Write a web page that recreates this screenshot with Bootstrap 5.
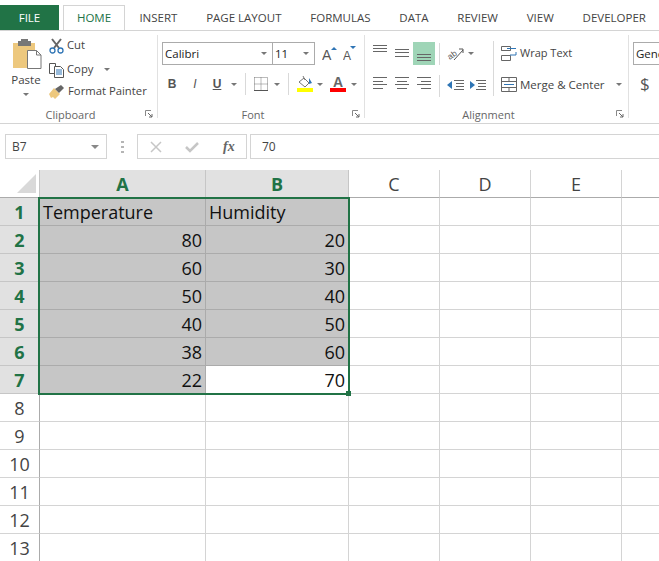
<!doctype html>
<html lang="en"><head><meta charset="utf-8"><title>Excel</title>
<link href="https://cdn.jsdelivr.net/npm/bootstrap@5.3.0/dist/css/bootstrap.min.css" rel="stylesheet">
<style>
html,body{height:561px;overflow:hidden;background:#fff;font-family:"Open Sans","Noto Sans",sans-serif;color:#444}
.tabbar{height:31px;border-bottom:1px solid #d4d4d4;align-items:flex-end;flex-wrap:nowrap;white-space:nowrap;font-size:11.5px;overflow:hidden}
.tabbar .nav-link{flex:none;height:25px;line-height:25px;padding:0 14.4px;color:#444;border:0;border-radius:0;background:none}
.tabbar .nav-link.tab-file{width:59px;margin-right:4px;padding:0;text-align:center;background:#217346;color:#fff}
.tabbar .nav-link.active{width:62px;padding:0;text-align:center;color:#217346;border:1px solid #d4d4d4;border-bottom:0;height:25px;line-height:24px}
.ribbon{height:93px;border-bottom:1px solid #d4d4d4;font-size:11.3px;white-space:nowrap;overflow:hidden}
.grp{flex:none;border-right:1px solid #e1e1e1;height:83px;margin-top:4px;position:relative;display:flex;flex-direction:column}
.g-clip{width:158px}.g-font{width:207px}.g-align{width:264px}.g-num{border:0;width:30px}
.grp-body{height:73px;flex:none}
.grp-lab{height:14px;line-height:14px;font-size:11px;text-align:center;color:#666;padding-right:16px}
.launch{position:absolute;right:4px;bottom:0;width:8px;height:8px}
.paste{width:40px;margin:4px 0 0 6px;text-align:center;font-size:11.5px}
.paste span{display:block;line-height:14px;margin-top:4px}
.paste .caret{display:block;margin:6px auto 0}
.clip-list{margin:-1px 0 0 3px;width:105px}
.clip-row{height:23px;gap:3px}
.clip-row svg{flex:none}
.clip-row.copyrow{margin-top:1px;margin-bottom:-1px}
.caret{width:0;height:0;border:3px solid transparent;border-top:3px solid #777;border-bottom:0;display:inline-block;flex:none}
.box{border:1px solid #ababab;height:23px;background:#fff;font-size:11.5px;color:#222;padding:0 5px 0 2px}
.fr1{margin:7px 0 0 4px;height:23px}.fr2{margin:7px 0 0 3px;height:24px}
.vsep{width:1px;background:#d9d9d9;height:22px;flex:none}
.vsep2{width:1px;background:#d9d9d9;flex:none;height:55px;margin:6px 0 0 7px}
.ic{flex:none;display:block}
.bt{font-size:12px;font-weight:700;color:#555;width:22px;text-align:center;font-family:"Liberation Sans",sans-serif;line-height:18px}
.act{background:#9fd5b7}
.atxt{font-size:11.5px;color:#444;gap:3px}
.atxt.wrapt{font-size:11px}
.fbar{height:46px;padding:10px 0 11px 5px}
.fbox{border:1px solid #d4d4d4;height:25px;background:#fff;font-size:12px;color:#444;flex:none}
.namebox{width:102px;padding:0 6px}
.nbcaret{border-width:4px 4px 0;border-top-color:#888;margin-right:1px}
.fdots{width:30px;flex:none;display:flex;align-items:center;justify-content:center}
.fbtns{width:110px;padding-left:12px}
.fb2{margin-left:23px}.fb3{margin-left:24px;font-family:"Liberation Serif",serif;font-style:italic;font-weight:700;color:#666;font-size:14px}
.fval{width:420px;margin-left:3px;padding:0 11px}
.sheetwrap{position:relative;height:391px;overflow:hidden}
.sheet{table-layout:fixed;border-collapse:separate;border-spacing:0;width:760px;margin:0;font-family:"Open Sans","Noto Sans",sans-serif}
.sheet th,.sheet td{padding:1px 0 0;height:28px;border:0;border-right:1px solid #d4d4d4;border-bottom:1px solid #d4d4d4;font-size:18px;line-height:26px;color:#111;box-shadow:none;background:#fff;overflow:hidden;white-space:nowrap}
.sheet thead th{height:28px;text-align:center;font-weight:400;color:#444;border-bottom-color:#ababab;vertical-align:middle;padding:0}
.sheet tbody th{text-align:center;font-weight:400;color:#444;border-right-color:#ababab}
.sheet .hdsel{background:#e1e1e1;color:#217346;font-weight:700;border-right-color:#c6c6c6;border-bottom-color:#c6c6c6}
.sheet tbody th.hdsel{border-right-color:#ababab}
.sheet thead th.hdsel{border-bottom-color:#ababab}
.sheet td.csel{background:#c6c6c6;border-color:#ababab}
.sheet td{padding:1px 3px 0}
.sheet td.num{text-align:right}
.sheet thead th.corner{border-right-color:#c6c6c6;position:relative;padding:0}
.sheet thead th.corner svg{display:block}
.selbox{position:absolute;left:38px;top:27px;width:312px;height:198px;border:2px solid #217346;pointer-events:none}
.handle{position:absolute;right:-3px;bottom:-3px;width:5px;height:5px;background:#217346}
</style></head><body>
<nav class="nav tabbar d-flex">
<a class="nav-link tab-file" href="#">FILE</a><a class="nav-link active" href="#">HOME</a><a class="nav-link" href="#">INSERT</a><a class="nav-link" href="#">PAGE LAYOUT</a><a class="nav-link" href="#">FORMULAS</a><a class="nav-link" href="#">DATA</a><a class="nav-link" href="#">REVIEW</a><a class="nav-link" href="#">VIEW</a><a class="nav-link" href="#">DEVELOPER</a>
</nav>
<section class="ribbon d-flex">
 <div class="grp g-clip">
  <div class="grp-body d-flex">
   <div class="paste">
    <svg class="ic" width="29" height="30" viewBox="0 0 29 30" style="margin-left:7px"><rect x="0" y="4" width="22" height="25" fill="#edc87e"/><rect x="5" y="2" width="13" height="5" fill="#777"/><rect x="8" y="0" width="7" height="3" fill="#777"/><path d="M14.500 11.500h9l4.500 4.500v13.500H14.500z" fill="#fff" stroke="#777"/><path d="M23.500 11.500V16H28" fill="none" stroke="#777"/></svg>
    <span>Paste</span><i class="caret"></i>
   </div>
   <div class="clip-list">
    <div class="clip-row d-flex align-items-center"><svg width="15" height="16" viewBox="0 0 15 16"><path d="M3 1l7 9M12 1L5 10" stroke="#666" stroke-width="2" fill="none"/><circle cx="3.500" cy="12.500" r="2.500" fill="none" stroke="#2f75b5" stroke-width="1.300"/><circle cx="11.500" cy="12.500" r="2.500" fill="none" stroke="#2f75b5" stroke-width="1.300"/></svg><span>Cut</span></div>
    <div class="clip-row copyrow d-flex align-items-center"><svg width="15" height="16" viewBox="0 0 15 16"><path d="M.5 1.500h6v10h-6z" fill="#fff" stroke="#555"/><path d="M5.500 4.500h6l3 3v8h-9z" fill="#fff" stroke="#555"/><path d="M7 8h6M7 10h6M7 12h6" stroke="#2f75b5"/></svg><span>Copy</span><i class="caret ms-2"></i></div>
    <div class="clip-row d-flex align-items-center"><svg width="16" height="15" viewBox="0 0 16 15"><path d="M0 10l5-6 6 6-5 5-2-2-2 1z" fill="#edc87e"/><path d="M6 5l6-4 3 3-5 5z" fill="#666"/></svg><span>Format Painter</span></div>
   </div>
  </div>
  <div class="grp-lab">Clipboard</div>
  <svg class="launch" viewBox="0 0 8 8"><path d="M.5 6V.5H6" fill="none" stroke="#888"/><path d="M3 3l4 4M7 4v3H4" fill="none" stroke="#666"/></svg>
 </div>
 <div class="grp g-font">
  <div class="grp-body">
   <div class="fr1 d-flex align-items-center">
    <div class="box d-flex align-items-center justify-content-between" style="width:111px"><span>Calibri</span><i class="caret"></i></div>
    <div class="box d-flex align-items-center justify-content-between" style="width:43px;margin-left:-1px"><span>11</span><i class="caret"></i></div>
    <svg class="ic" width="20" height="18" viewBox="0 0 20 18" style="margin-left:7px"><text x="0" y="15" font-size="14" fill="#555" font-family="Liberation Sans">A</text><path d="M9 5l3-3 3 3z" fill="#2f75b5"/></svg>
    <svg class="ic" width="16" height="18" viewBox="0 0 16 18" style="margin-left:1px"><text x="0" y="15" font-size="12" fill="#555" font-family="Liberation Sans">A</text><path d="M7 1h6l-3 3z" fill="#2f75b5"/></svg>
   </div>
   <div class="fr2 d-flex align-items-center">
    <span class="bt">B</span><span class="bt" style="font-style:italic;font-weight:400;margin-left:1px">I</span><span class="bt text-decoration-underline">U</span><i class="caret" style="margin:0 8px 0 3px"></i><span class="vsep"></span>
    <svg class="ic" width="14" height="14" viewBox="0 0 14 14" style="margin-left:8px"><path d="M.5.5h13v13M.5.5v13M7 .5v13M.5 7h13" fill="none" stroke="#777" stroke-dasharray="1 1"/><path d="M0 13.500h14" stroke="#555"/></svg><i class="caret" style="margin:0 8px 0 6px"></i><span class="vsep"></span>
    <svg class="ic" width="16" height="18" viewBox="0 0 16 18" style="margin-left:8px"><path d="M2 7l5-4 5 5-4 4z" fill="#fff" stroke="#777"/><path d="M6 1l2 4" stroke="#777"/><path d="M12 3l3 5-3 1z" fill="#2f75b5"/><rect x="0" y="13" width="16" height="4" fill="#ffff00"/></svg><i class="caret" style="margin:0 7px 0 4px"></i>
    <svg class="ic" width="16" height="18" viewBox="0 0 16 18"><text x="8" y="12" text-anchor="middle" font-size="14" font-weight="700" fill="#666" font-family="Liberation Sans">A</text><rect x="0" y="13" width="16" height="4" fill="#f00"/></svg><i class="caret" style="margin-left:5px"></i>
   </div>
  </div>
  <div class="grp-lab">Font</div>
  <svg class="launch" viewBox="0 0 8 8"><path d="M.5 6V.5H6" fill="none" stroke="#888"/><path d="M3 3l4 4M7 4v3H4" fill="none" stroke="#666"/></svg>
 </div>
 <div class="grp g-align">
  <div class="grp-body d-flex">
   <div style="margin:7px 0 0 4px">
    <div class="d-flex" style="height:23px">
     <svg class="ic" width="22" height="23" viewBox="0 0 22 23"><path d="M4 3.500h14M4 6.500h14M4 9.500h14" stroke="#666"/></svg>
     <svg class="ic" width="22" height="23" viewBox="0 0 22 23"><path d="M4 7.500h14M4 10.500h14M4 14.500h14" stroke="#666"/></svg>
     <svg class="ic act" width="22" height="23" viewBox="0 0 22 23"><path d="M4 12.500h14M4 15.500h14M4 18.500h14" stroke="#666"/></svg>
    </div>
    <div class="d-flex" style="margin-top:9px;height:23px">
     <svg class="ic" width="22" height="23" viewBox="0 0 22 23"><path d="M4 3.500h14M4 7.500h10M4 10.500h14M4 14.500h10" stroke="#666"/></svg>
     <svg class="ic" width="22" height="23" viewBox="0 0 22 23"><path d="M4 3.500h14M6 7.500h10M4 10.500h14M6 14.500h10" stroke="#666"/></svg>
     <svg class="ic" width="22" height="23" viewBox="0 0 22 23"><path d="M4 3.500h14M8 7.500h10M4 10.500h14M8 14.500h10" stroke="#666"/></svg>
    </div>
   </div>
   <div class="d-flex flex-column" style="margin-top:7px">
    <div class="d-flex align-items-center" style="height:23px;margin-left:4px"><span class="vsep"></span>
     <svg class="ic" width="18" height="18" viewBox="0 0 18 18" style="margin-left:7px;overflow:visible"><text x="0" y="12" font-size="8.500" fill="#555" transform="rotate(-35 6 9)" font-family="Liberation Sans">ab</text><path d="M7 15L16 5M12 4h4v4" fill="none" stroke="#555"/></svg><i class="caret" style="margin-left:3px"></i></div>
    <div class="d-flex align-items-center" style="height:23px;margin:9px 0 0 4px"><span class="vsep"></span>
     <svg class="ic" width="17" height="13" viewBox="0 0 17 13" style="margin-left:7px"><path d="M7 1.500h10M9 4.500h8M9 7.500h8M7 10.500h10" stroke="#666"/><path d="M0 6l5-4v8z" fill="#2f75b5"/></svg>
     <svg class="ic" width="17" height="13" viewBox="0 0 17 13" style="margin-left:5px"><path d="M7 1.500h10M9 4.500h8M9 7.500h8M7 10.500h10" stroke="#666"/><path d="M6 6L1 2v8z" fill="#2f75b5"/></svg></div>
   </div>
   <span class="vsep2"></span>
   <div style="margin:7px 0 0 7px">
    <div class="atxt wrapt d-flex align-items-center" style="height:23px"><svg class="ic" width="16" height="15" viewBox="0 0 16 15"><path d="M.5.500h9v4h-9zM.5 4.500h9M.5 9.500h9v5h-9z" fill="none" stroke="#666"/><path d="M6 2.500h9M15 6v3H9" fill="none" stroke="#2f75b5"/></svg><span>Wrap Text</span></div>
    <div class="atxt d-flex align-items-center" style="height:23px;margin-top:8px"><svg class="ic" width="16" height="15" viewBox="0 0 16 15"><path d="M.5.500h15v14H.5zM.5 4.500h15M.5 10.500h15M8 .5v4M8 10.500v4" fill="none" stroke="#666"/><path d="M3 7.500h10" stroke="#2f75b5"/></svg><span>Merge &amp; Center</span><i class="caret ms-2"></i></div>
   </div>
  </div>
  <div class="grp-lab">Alignment</div>
  <svg class="launch" viewBox="0 0 8 8"><path d="M.5 6V.5H6" fill="none" stroke="#888"/><path d="M3 3l4 4M7 4v3H4" fill="none" stroke="#666"/></svg>
 </div>
 <div class="grp g-num">
  <div class="box" style="margin:7px 0 0 4px;width:60px;line-height:21px">General</div>
  <div style="margin:7px 0 0 11px;font-size:17px;line-height:24px;color:#555">$</div>
 </div>
</section>
<section class="fbar d-flex">
 <div class="fbox namebox d-flex align-items-center justify-content-between"><span>B7</span><i class="caret nbcaret"></i></div>
 <div class="fdots"><svg width="3" height="12" viewBox="0 0 3 12"><path d="M0 0h3v2H0zM0 5h3v2H0zM0 10h3v2H0z" fill="#b5b5b5"/></svg></div>
 <div class="fbox fbtns d-flex align-items-center">
  <svg width="12" height="12" viewBox="0 0 12 12"><path d="M1 1l10 10M11 1L1 11" stroke="#c6c6c6" stroke-width="1.500"/></svg>
  <svg class="fb2" width="14" height="12" viewBox="0 0 14 12"><path d="M1 6l4 4 8-8" fill="none" stroke="#c6c6c6" stroke-width="2.500"/></svg>
  <span class="fb3">fx</span>
 </div>
 <div class="fbox fval d-flex align-items-center">70</div>
</section>
<div class="sheetwrap">
<table class="table sheet">
<colgroup><col style="width:40px"><col style="width:166px"><col style="width:143px"><col style="width:91px"><col style="width:91px"><col style="width:91px"><col style="width:138px"></colgroup>
<thead><tr><th class="corner"><svg width="39" height="27" viewBox="0 0 39 27"><path d="M36 4v19H17z" fill="#d9d9d9"/></svg></th><th class="hdsel">A</th><th class="hdsel">B</th><th>C</th><th>D</th><th>E</th><th></th></tr></thead>
<tbody>
<tr><th class="hdsel">1</th><td class="csel">Temperature</td><td class="csel">Humidity</td><td></td><td></td><td></td><td></td></tr>
<tr><th class="hdsel">2</th><td class="csel num">80</td><td class="csel num">20</td><td></td><td></td><td></td><td></td></tr>
<tr><th class="hdsel">3</th><td class="csel num">60</td><td class="csel num">30</td><td></td><td></td><td></td><td></td></tr>
<tr><th class="hdsel">4</th><td class="csel num">50</td><td class="csel num">40</td><td></td><td></td><td></td><td></td></tr>
<tr><th class="hdsel">5</th><td class="csel num">40</td><td class="csel num">50</td><td></td><td></td><td></td><td></td></tr>
<tr><th class="hdsel">6</th><td class="csel num">38</td><td class="csel num">60</td><td></td><td></td><td></td><td></td></tr>
<tr><th class="hdsel">7</th><td class="csel num">22</td><td class="num">70</td><td></td><td></td><td></td><td></td></tr>
<tr><th>8</th><td></td><td></td><td></td><td></td><td></td><td></td></tr>
<tr><th>9</th><td></td><td></td><td></td><td></td><td></td><td></td></tr>
<tr><th>10</th><td></td><td></td><td></td><td></td><td></td><td></td></tr>
<tr><th>11</th><td></td><td></td><td></td><td></td><td></td><td></td></tr>
<tr><th>12</th><td></td><td></td><td></td><td></td><td></td><td></td></tr>
<tr><th>13</th><td></td><td></td><td></td><td></td><td></td><td></td></tr>
</tbody></table>
<div class="selbox"><span class="handle"></span></div>
</div>
<script src="https://cdn.jsdelivr.net/npm/bootstrap@5.3.0/dist/js/bootstrap.bundle.min.js"></script>
</body></html>
